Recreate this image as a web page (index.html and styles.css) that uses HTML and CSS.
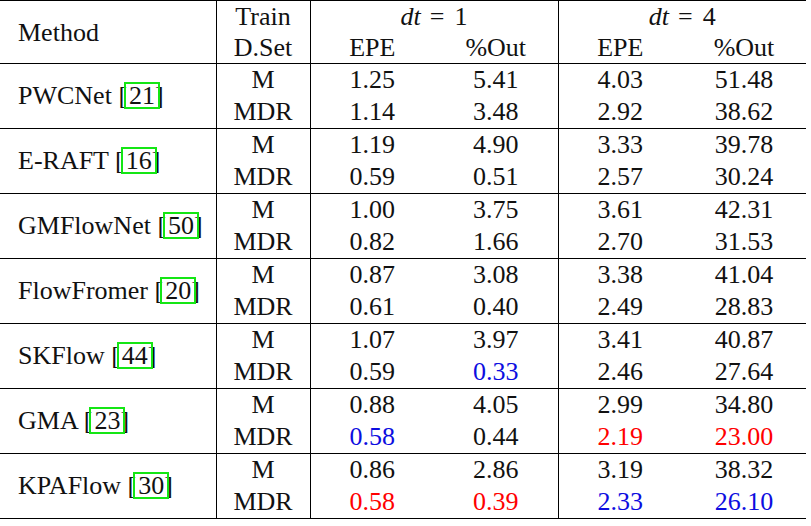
FILE: index.html
```html
<!DOCTYPE html>
<html>
<head>
  <meta charset="utf-8">
  <title>Optical flow results</title>
  <link rel="stylesheet" href="styles.css">
</head>
<body>

<table class="results">
  <colgroup>
    <col class="c-method">
    <col class="c-train">
    <col class="c-num">
    <col class="c-num">
    <col class="c-num">
    <col class="c-num">
  </colgroup>
  <thead>
    <tr>
      <th rowspan="2" class="method">Method</th>
      <th class="split">Train</th>
      <th colspan="2" class="split"><i>dt</i><span class="eq">=</span>1</th>
      <th colspan="2"><i>dt</i><span class="eq">=</span>4</th>
    </tr>
    <tr>
      <th class="split">D.Set</th>
      <th>EPE</th>
      <th class="split">%Out</th>
      <th>EPE</th>
      <th>%Out</th>
    </tr>
  </thead>

  <tbody>
    <tr>
      <td rowspan="2" class="method">PWCNet [<span class="cite">21</span>]</td>
      <td class="split">M</td><td>1.25</td><td class="split">5.41</td><td>4.03</td><td>51.48</td>
    </tr>
    <tr>
      <td class="split">MDR</td><td>1.14</td><td class="split">3.48</td><td>2.92</td><td>38.62</td>
    </tr>
  </tbody>

  <tbody>
    <tr>
      <td rowspan="2" class="method">E-RAFT [<span class="cite">16</span>]</td>
      <td class="split">M</td><td>1.19</td><td class="split">4.90</td><td>3.33</td><td>39.78</td>
    </tr>
    <tr>
      <td class="split">MDR</td><td>0.59</td><td class="split">0.51</td><td>2.57</td><td>30.24</td>
    </tr>
  </tbody>

  <tbody>
    <tr>
      <td rowspan="2" class="method">GMFlowNet [<span class="cite">50</span>]</td>
      <td class="split">M</td><td>1.00</td><td class="split">3.75</td><td>3.61</td><td>42.31</td>
    </tr>
    <tr>
      <td class="split">MDR</td><td>0.82</td><td class="split">1.66</td><td>2.70</td><td>31.53</td>
    </tr>
  </tbody>

  <tbody>
    <tr>
      <td rowspan="2" class="method">FlowFromer [<span class="cite">20</span>]</td>
      <td class="split">M</td><td>0.87</td><td class="split">3.08</td><td>3.38</td><td>41.04</td>
    </tr>
    <tr>
      <td class="split">MDR</td><td>0.61</td><td class="split">0.40</td><td>2.49</td><td>28.83</td>
    </tr>
  </tbody>

  <tbody>
    <tr>
      <td rowspan="2" class="method">SKFlow [<span class="cite">44</span>]</td>
      <td class="split">M</td><td>1.07</td><td class="split">3.97</td><td>3.41</td><td>40.87</td>
    </tr>
    <tr>
      <td class="split">MDR</td><td>0.59</td><td class="split second">0.33</td><td>2.46</td><td>27.64</td>
    </tr>
  </tbody>

  <tbody>
    <tr>
      <td rowspan="2" class="method">GMA [<span class="cite">23</span>]</td>
      <td class="split">M</td><td>0.88</td><td class="split">4.05</td><td>2.99</td><td>34.80</td>
    </tr>
    <tr>
      <td class="split">MDR</td><td class="second">0.58</td><td class="split">0.44</td><td class="best">2.19</td><td class="best">23.00</td>
    </tr>
  </tbody>

  <tbody>
    <tr>
      <td rowspan="2" class="method">KPAFlow [<span class="cite">30</span>]</td>
      <td class="split">M</td><td>0.86</td><td class="split">2.86</td><td>3.19</td><td>38.32</td>
    </tr>
    <tr>
      <td class="split">MDR</td><td class="best">0.58</td><td class="split best">0.39</td><td class="second">2.33</td><td class="second">26.10</td>
    </tr>
  </tbody>
</table>

</body>
</html>
```

FILE: styles.css
```css
body {
  margin: 0;
  background: #fff;
  color: #111;
  font-family: "Liberation Serif", "Times New Roman", serif;
}
.results {
  border-collapse: collapse;
  table-layout: fixed;
  width: 806px;
  font-size: 26px;
  border-top: 1px solid #000;
  border-bottom: 1px solid #000;
}
.c-method {
  width: 216px;
}
.c-train {
  width: 94px;
}
.c-num {
  width: 124px;
}
th, td {
  padding: 0;
  text-align: center;
  font-weight: normal;
  white-space: nowrap;
}
thead tr {
  height: 31px;
  line-height: 31px;
}
tbody tr {
  height: 32px;
  line-height: 32px;
}
thead, tbody {
  border-bottom: 1px solid #000;
}
.method {
  text-align: left;
  padding-left: 18px;
  border-right: 1px solid #000;
}
.split {
  border-right: 1px solid #000;
}
.eq {
  margin: 0 10px 0 9px;
}
.cite {
  display: inline-block;
  line-height: 23px;
  padding: 0 3px;
  margin: 0 -5px 0 -3px;
  border: 2px solid #14e614;
  position: relative;
}
.best {
  color: #f00;
}
.second {
  color: #0d0de0;
}
```
